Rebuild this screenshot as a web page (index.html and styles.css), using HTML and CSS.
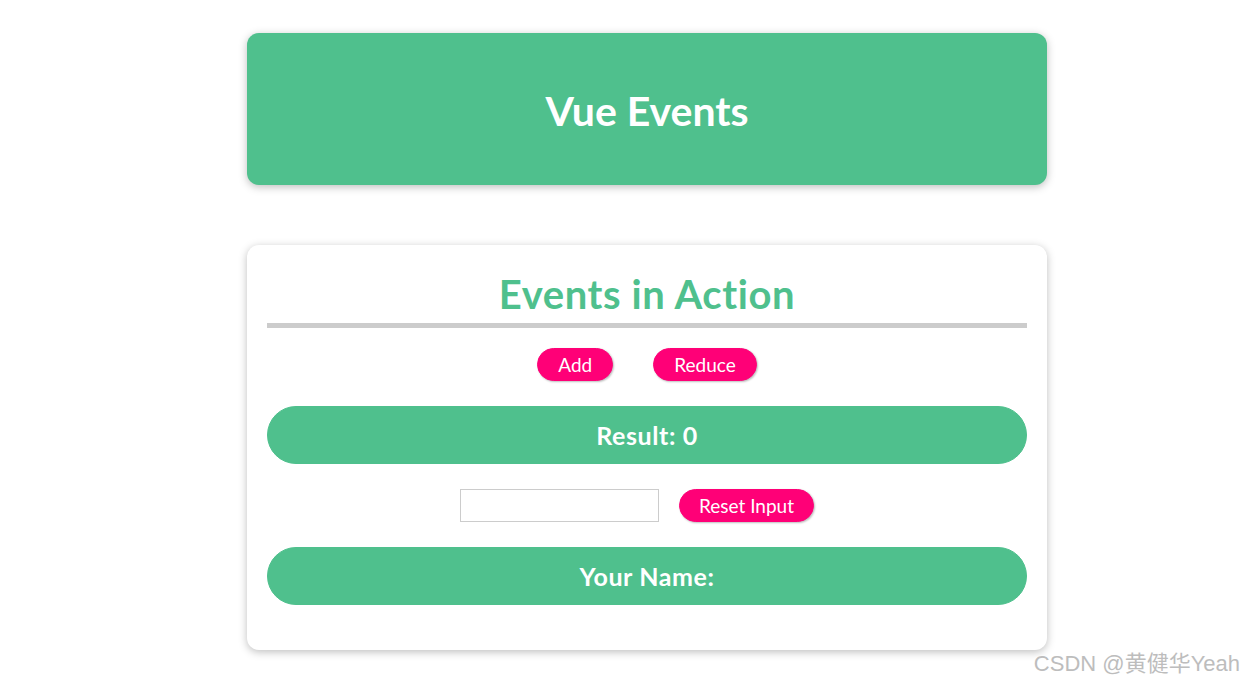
FILE: index.html
```html
<!DOCTYPE html>
<html lang="en">
<head>
<meta charset="utf-8">
<title>Vue Events</title>
<link rel="stylesheet" href="styles.css">
</head>
<body>
  <header class="hero">
    <h1 class="hero-title">Vue Events</h1>
  </header>
  <section class="events">
    <h2 class="events-title">Events in Action</h2>
    <div class="btn-row">
      <button class="btn">Add</button>
      <button class="btn">Reduce</button>
    </div>
    <p class="pill">Result: 0</p>
    <div class="input-row">
      <input class="text-input" type="text">
      <button class="btn">Reset Input</button>
    </div>
    <p class="pill">Your Name: </p>
  </section>
  <div class="watermark">CSDN @黄健华Yeah</div>
</body>
</html>
```

FILE: styles.css
```css
html, body {
  margin: 0;
  padding: 0;
}

body {
  font-family: "Lato", "Noto Sans", sans-serif;
  font-size: 20px;
  background: #ffffff;
  padding: 33px 0 0 50px;
  min-height: 682px;
  box-sizing: border-box;
  position: relative;
}

.hero {
  width: 800px;
  height: 152px;
  margin: 0 auto;
  box-sizing: border-box;
  background-color: #4fc08d;
  border-radius: 12px;
  box-shadow: 0 2px 8px rgba(0, 0, 0, 0.26);
  display: flex;
  align-items: center;
  justify-content: center;
  color: #ffffff;
}

.hero-title {
  margin: 0;
  font-size: 41px;
  font-weight: 700;
  line-height: 1;
  padding-top: 2px;
}

.events {
  width: 800px;
  margin: 60px auto 0;
  box-sizing: border-box;
  padding: 20px;
  background: #ffffff;
  border-radius: 12px;
  box-shadow: 0 2px 8px rgba(0, 0, 0, 0.26);
  text-align: center;
}

.events-title {
  margin: 0 0 20px;
  font-size: 40px;
  line-height: 58px;
  height: 58px;
  font-weight: 700;
  letter-spacing: 0.6px;
  color: #4fc08d;
  border-bottom: 5px solid #cccccc;
}

.btn-row {
  display: flex;
  justify-content: center;
  gap: 40px;
  height: 33px;
}

.btn {
  font-family: inherit;
  font-size: 19px;
  line-height: 29px;
  height: 33px;
  box-sizing: border-box;
  border: 1px solid #ff0077;
  background-color: #ff0077;
  color: #ffffff;
  padding: 1px 20px;
  border-radius: 20px;
  box-shadow: 1px 1px 2px rgba(0, 0, 0, 0.26);
  cursor: pointer;
}

.input-row .btn {
  padding: 1px 19px;
}

.pill {
  margin: 25px 0;
  height: 58px;
  box-sizing: border-box;
  padding: 10px;
  border: 1px solid #4fc08d;
  background-color: #4fc08d;
  color: #ffffff;
  border-radius: 30px;
  font-size: 25px;
  line-height: 36px;
  font-weight: 700;
  letter-spacing: 0.6px;
}

.input-row {
  display: flex;
  justify-content: center;
  gap: 20px;
  height: 33px;
  padding-right: 20px;
}

.text-input {
  font-family: inherit;
  font-size: 20px;
  width: 199px;
  height: 33px;
  box-sizing: border-box;
  border: 1px solid #cccccc;
  padding: 1px 2px;
  margin: 0;
}

.watermark {
  position: absolute;
  right: 4px;
  top: 645px;
  font-family: "Liberation Sans", "Noto Sans CJK SC", sans-serif;
  font-size: 22px;
  color: #bdbdbd;
  text-shadow: 0 0 2px #ffffff;
  white-space: nowrap;
}
```
